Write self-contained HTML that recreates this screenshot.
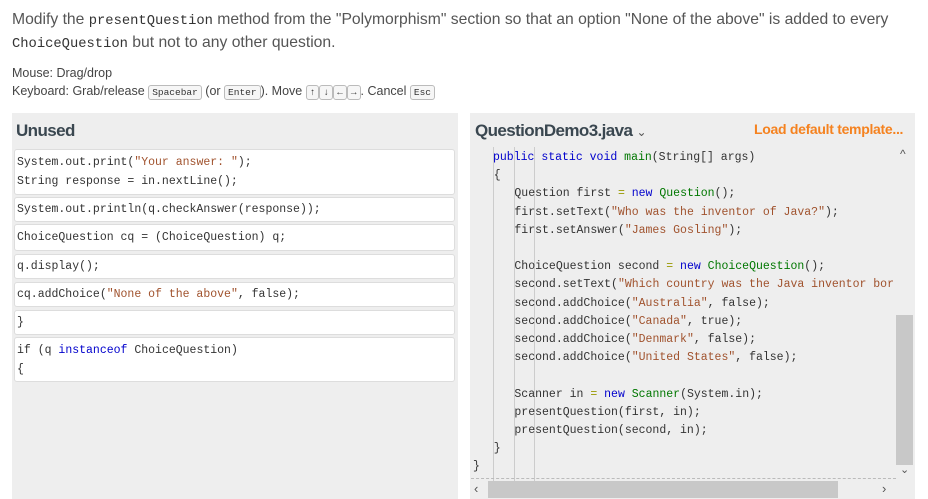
<!DOCTYPE html>
<html><head><meta charset="utf-8"><style>
*{box-sizing:border-box;margin:0;padding:0}
body{width:928px;height:499px;overflow:hidden;background:#fff;font-family:"Liberation Sans",sans-serif;color:#444;position:relative}
.p{position:absolute;left:12px;font-size:15.7px;color:#555;line-height:23px;white-space:nowrap}
.p code{font-family:"Liberation Mono",monospace;font-size:13.8px;color:#333}
.k{font-size:12.5px;color:#444;position:absolute;left:12px;white-space:nowrap}
kbd{font-family:"Liberation Mono",monospace;font-size:9.5px;border:1px solid #bbb;border-radius:3px;padding:0 3px;background:#f6f6f6;color:#333;display:inline-block;line-height:13px}
.panel{position:absolute;top:113px;height:386px;background:#eee}
.h{position:absolute;font-weight:bold;font-size:17px;color:#3a4750;letter-spacing:-0.6px}
.blk{position:absolute;left:14px;width:441px;background:#fff;border:1px solid #ddd;border-radius:3px;font-family:"Liberation Mono",monospace;font-size:11.5px;color:#333;line-height:18.5px;padding:4px 2px;white-space:pre}
.s{color:#a0522d}.kw{color:#00c}.ty{color:#070}.op{color:#990}
.code{position:absolute;font-family:"Liberation Mono",monospace;font-size:11.5px;color:#333;white-space:pre;line-height:18.2px}
.g{position:absolute;width:1px;background:#ccc;top:147px;height:344px}
</style></head><body>
<div class="p" style="top:8px">Modify the <code>presentQuestion</code> method from the "Polymorphism" section so that an option "None of the above" is added to every</div>
<div class="p" style="top:31px"><code>ChoiceQuestion</code> but not to any other question.</div>
<div class="k" style="top:66px">Mouse: Drag/drop</div>
<div class="k" style="top:84px">Keyboard: Grab/release <kbd>Spacebar</kbd> (or <kbd>Enter</kbd>). Move <kbd>↑</kbd><kbd>↓</kbd><kbd>←</kbd><kbd>→</kbd>. Cancel <kbd>Esc</kbd></div>

<div class="panel" style="left:12px;width:446px"></div>
<div class="h" style="left:16px;top:121px">Unused</div>
<div class="blk" style="top:149px;height:46px">System.out.print(<span class="s">"Your answer: "</span>);
String response = in.nextLine();</div>
<div class="blk" style="top:197px;height:25px;padding-top:3px">System.out.println(q.checkAnswer(response));</div>
<div class="blk" style="top:224px;height:27px;padding-top:4px">ChoiceQuestion cq = (ChoiceQuestion) q;</div>
<div class="blk" style="top:254px;height:25px;padding-top:3px">q.display();</div>
<div class="blk" style="top:282px;height:25px;padding-top:3px">cq.addChoice(<span class="s">"None of the above"</span>, false);</div>
<div class="blk" style="top:310px;height:25px;padding-top:3px">}</div>
<div class="blk" style="top:337px;height:45px;padding-top:4px">if (q <span class="kw">instanceof</span> ChoiceQuestion)
{</div>

<div class="panel" style="left:470px;width:445px"></div>
<div class="h" style="left:475px;top:121px">QuestionDemo3.java <span style="font-weight:normal;font-size:12px;color:#555">⌄</span></div>
<div class="h" style="left:754px;top:121px;font-size:14px;letter-spacing:-0.3px;color:#f5821f">Load default template...</div>
<div class="g" style="left:493px"></div><div class="g" style="left:514px"></div><div class="g" style="left:534px"></div>
<div class="code" style="left:473px;top:149px"><span style="padding-left:20px"><span class="kw">public</span> <span class="kw">static</span> <span class="kw">void</span> <span class="ty">main</span>(String[] args)</span>
   {
      Question first <span class="op">=</span> <span class="kw">new</span> <span class="ty">Question</span>();
      first.setText(<span class="s">"Who was the inventor of Java?"</span>);
      first.setAnswer(<span class="s">"James Gosling"</span>);

      ChoiceQuestion second <span class="op">=</span> <span class="kw">new</span> <span class="ty">ChoiceQuestion</span>();
      second.setText(<span class="s">"Which country was the Java inventor bor</span>
      second.addChoice(<span class="s">"Australia"</span>, false);
      second.addChoice(<span class="s">"Canada"</span>, true);
      second.addChoice(<span class="s">"Denmark"</span>, false);
      second.addChoice(<span class="s">"United States"</span>, false);

      Scanner in <span class="op">=</span> <span class="kw">new</span> <span class="ty">Scanner</span>(System.in);
      presentQuestion(first, in);
      presentQuestion(second, in);
   }
}</div>
<div style="position:absolute;left:896px;top:147px;width:17px;height:330px;background:#eee"></div>
<div style="position:absolute;left:896px;top:315px;width:17px;height:150px;background:#c8c8c8"></div>
<div style="position:absolute;left:900px;top:147px;font-size:12px;color:#555">^</div>
<div style="position:absolute;left:900px;top:463px;font-size:11px;color:#555">⌄</div>
<div style="position:absolute;left:471px;top:478px;width:425px;border-top:1px dashed #bbb"></div>
<div style="position:absolute;left:488px;top:481px;width:350px;height:17px;background:#c8c8c8"></div>
<div style="position:absolute;left:474px;top:481px;font-size:13px;color:#555">‹</div>
<div style="position:absolute;left:882px;top:481px;font-size:13px;color:#555">›</div>
</body></html>
